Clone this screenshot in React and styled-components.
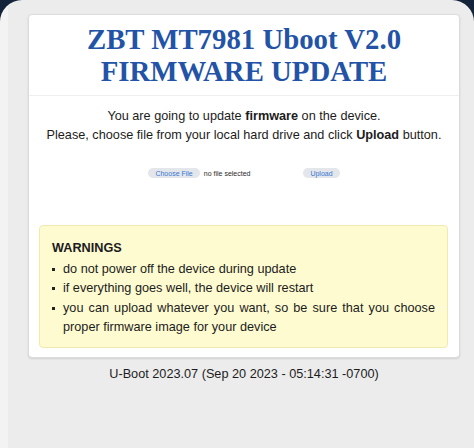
import React from "react";
import styled, { createGlobalStyle } from "styled-components";

const Global = createGlobalStyle`
  html, body {
    margin: 0;
    padding: 0;
    width: 474px;
    height: 448px;
    overflow: hidden;
    background: #13233a;
  }
  * { box-sizing: border-box; }
`;

const Screen = styled.div`
  width: 474px;
  height: 448px;
  background: linear-gradient(to right, #f3f3f3 0, #f3f3f3 8px, #ececec 8px);
  border-radius: 22px 22px 0 0;
  padding: 14px 14px 0 28px;
  font-family: "Liberation Sans", Arial, sans-serif;
  color: #1c1c1c;
`;

const Card = styled.div`
  background: #fff;
  border-radius: 4px;
  border: 1px solid #dcdcdc;
  box-shadow: 0 1px 2px rgba(0, 0, 0, 0.12);
  padding-bottom: 9px;
`;

const Header = styled.div`
  padding: 8px 0 8px;
  border-bottom: 1px solid #efefef;
  text-align: center;
`;

const Title = styled.h1`
  margin: 0;
  font-family: "Liberation Serif", "Times New Roman", serif;
  font-weight: 700;
  font-size: 28.8px;
  line-height: 32px;
  color: #2253a6;
`;

const Intro = styled.p`
  margin: 11px 0 0;
  text-align: center;
  font-size: 12.7px;
  line-height: 19px;
`;

const FormRow = styled.div`
  display: flex;
  justify-content: center;
  align-items: center;
  margin-top: 23px;
  font-size: 7px;
`;

const FileField = styled.div`
  display: flex;
  align-items: center;
  width: 155px;
  gap: 4px;
`;

const PillButton = styled.span`
  display: inline-block;
  background: #e3e6ea;
  color: #3a78d4;
  border-radius: 5px;
  padding: 1.5px 7px;
  line-height: 7px;
  font-size: 7px;
`;

const FileName = styled.span`
  color: #2a2a2a;
`;

const Warning = styled.div`
  margin: 47px 11px 0 10px;
  background: #fefbd1;
  border: 1px solid #f1eab0;
  border-radius: 4px;
  padding: 13px 12px 10px 12px;
  font-size: 12.7px;
  line-height: 19.2px;
`;

const WarnTitle = styled.div`
  font-weight: 700;
  margin-bottom: 2px;
`;

const List = styled.ul`
  margin: 0;
  padding: 0;
  list-style: none;
`;

const Item = styled.li`
  position: relative;
  padding-left: 11px;
  text-align: justify;
  &::before {
    content: "";
    position: absolute;
    left: 0;
    top: 8px;
    width: 3px;
    height: 3px;
    background: #222;
  }
`;

const Footer = styled.div`
  text-align: center;
  margin-top: 7px;
  font-size: 12.7px;
  line-height: 19px;
`;

export default function App() {
  return (
    <>
      <Global />
      <Screen>
        <Card>
          <Header>
            <Title>
              ZBT MT7981 Uboot V2.0
              <br />
              FIRMWARE UPDATE
            </Title>
          </Header>
          <Intro>
            You are going to update <b>firmware</b> on the device.
            <br />
            Please, choose file from your local hard drive and click <b>Upload</b> button.
          </Intro>
          <FormRow>
            <FileField>
              <PillButton>Choose File</PillButton>
              <FileName>no file selected</FileName>
            </FileField>
            <PillButton>Upload</PillButton>
          </FormRow>
          <Warning>
            <WarnTitle>WARNINGS</WarnTitle>
            <List>
              <Item>do not power off the device during update</Item>
              <Item>if everything goes well, the device will restart</Item>
              <Item>
                you can upload whatever you want, so be sure that you choose proper firmware image for your device
              </Item>
            </List>
          </Warning>
        </Card>
        <Footer>U-Boot 2023.07 (Sep 20 2023 - 05:14:31 -0700)</Footer>
      </Screen>
    </>
  );
}
